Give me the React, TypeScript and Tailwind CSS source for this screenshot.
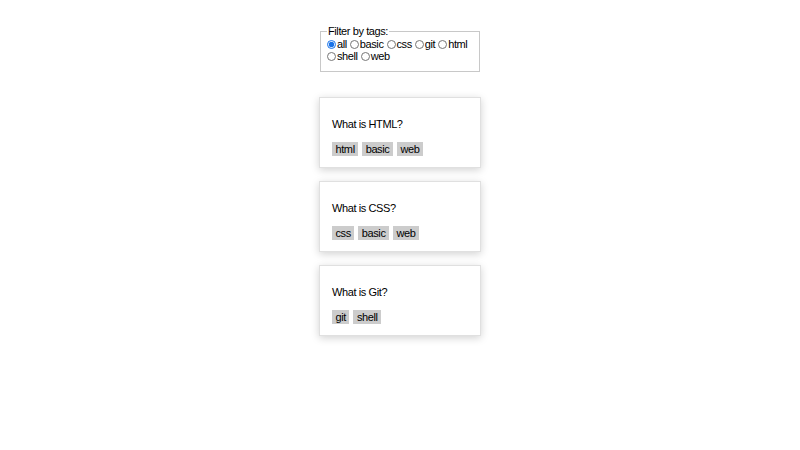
const tags = ["all", "basic", "css", "git", "html", "shell", "web"];

const cards = [
  { title: "What is HTML?", tags: ["html", "basic", "web"] },
  { title: "What is CSS?", tags: ["css", "basic", "web"] },
  { title: "What is Git?", tags: ["git", "shell"] },
];

export default function App() {
  return (
    <div className="min-h-[450px] bg-white pt-[24px] font-['Liberation_Sans',Arial,sans-serif] text-[11px] tracking-[-0.4px] text-black">
      <fieldset className="mx-auto w-[160px] border border-[#c8c8c8] px-[6px] pb-[9px]">
        <legend className="px-[1px] leading-[14px]">Filter by tags:</legend>
        <div className="flex flex-wrap leading-[12px]">
          {tags.map((t) => (
            <label key={t} className="flex items-center">
              <input
                type="radio"
                name="tag"
                defaultChecked={t === "all"}
                className="m-0 h-[9px] w-[9px] accent-[#1a73e8]"
              />
              <span className="ml-[1px] mr-[3px]">{t}</span>
            </label>
          ))}
        </div>
      </fieldset>

      <div className="mx-auto mt-[25px] flex w-[162px] flex-col gap-[13px]">
        {cards.map((c) => (
          <div
            key={c.title}
            className="h-[71px] border border-[#e0e0e0] bg-white px-[12px] pt-[20px] shadow-[0_2px_8px_rgba(0,0,0,0.18)]"
          >
            <div className="leading-[13px]">{c.title}</div>
            <div className="mt-[11px] flex gap-[4px]">
              {c.tags.map((t) => (
                <span key={t} className="bg-[#cccccc] px-[3.5px] leading-[14px]">
                  {t}
                </span>
              ))}
            </div>
          </div>
        ))}
      </div>
    </div>
  );
}
